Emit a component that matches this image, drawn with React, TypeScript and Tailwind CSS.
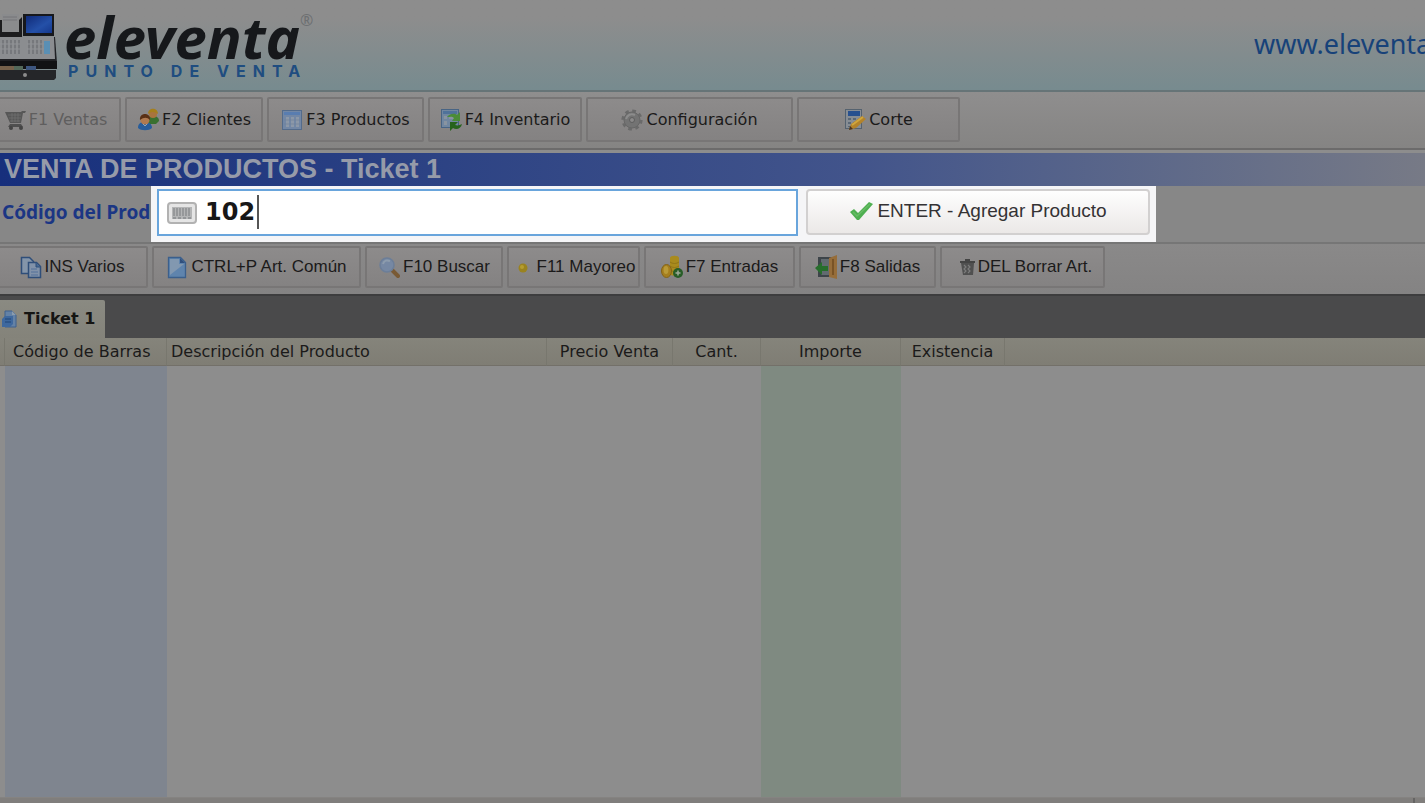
import type { ReactNode } from "react";

function LogoIcon() {
  return (
    <svg className="h-20 w-[58px] shrink-0" viewBox="0 0 58 80" aria-hidden="true">
      <defs>
        <linearGradient id="screen" x1="0" y1="0" x2="1" y2="1">
          <stop offset="0" stopColor="#102a78" />
          <stop offset="0.6" stopColor="#2450a8" />
          <stop offset="1" stopColor="#16388c" />
        </linearGradient>
      </defs>
      <path d="M0 20h2v12h17V20l3-3v20H0z" fill="#1c1c1e" />
      <path d="M2 14h17l-1 18H3z" fill="#8a8b8d" />
      <path d="M3 17h14M3 20h14" stroke="#747578" strokeWidth="1" />
      <path d="M23 14h31v22H23z" fill="#17181c" />
      <path d="M26 16h26v17H26z" fill="url(#screen)" />
      <path d="M0 37h55l2 26H0z" fill="#202124" />
      <path d="M0 37h54l1 22H0z" fill="#8b8d90" />
      <path d="M3 40v14M7 40v14M11 40v14M15 40v14M19 40v14M29 40v14M33 40v14M37 40v14M41 40v14" stroke="#76787c" strokeWidth="2" />
      <path d="M0 44h20M27 44h17M0 49h20M27 49h17" stroke="#909296" strokeWidth="1" />
      <path d="M44 41h6v13h-6z" fill="#5a8fb4" />
      <path d="M0 61h57v8H0z" fill="#111214" />
      <path d="M0 66h14v4H0z" fill="#75614b" />
      <path d="M14 66h9v4h-9z" fill="#536859" />
      <path d="M26 66h10v4H26z" fill="#3d567f" />
      <path d="M0 70h56v8l-2 2H0z" fill="#252629" />
      <circle cx="25" cy="75" r="2" fill="#8c8c8c" />
    </svg>
  );
}

function Icon({ children }: { children: ReactNode }) {
  return (
    <svg className="h-6 w-[22px] shrink-0" viewBox="0 0 22 24" aria-hidden="true">
      {children}
    </svg>
  );
}

const icons = {
  cart: (
    <Icon>
      <path d="M1 4h16l1-1h4l-1 2h-2l-2 10H6z" fill="#575757" />
      <path d="M4 7h13M5 10h12M6 13h10M8 5v9M11 5v9M14 5v9" stroke="#747474" strokeWidth="0.7" />
      <path d="M6 16h11l2 3H4z" fill="#4f4f4f" />
      <circle cx="7" cy="20" r="2" fill="#444" />
      <circle cx="17" cy="20" r="2" fill="#444" />
    </Icon>
  ),
  users: (
    <Icon>
      <path d="M10 14c0-5 2-6 6-6s6 2 6 5l-3 3h-9z" fill="#39702f" />
      <circle cx="16" cy="6" r="4" fill="#a8743e" />
      <path d="M11 6c0-7 10-7 10 0-3-2-6-3-10 0z" fill="#a57f1d" />
      <path d="M1 20c0-5 3-6 7-6s7 2 7 6c-3 3-11 3-14 0z" fill="#285d9b" />
      <circle cx="8" cy="12" r="4.5" fill="#b07a50" />
      <path d="M3 12c-1-8 11-8 10 0-3-3-6-3-10 0z" fill="#5a3015" />
      <path d="M6 16l2 2 2-2" fill="none" stroke="#92a4b5" />
    </Icon>
  ),
  table: (
    <Icon>
      <rect x="1.5" y="2.5" width="19" height="19" fill="#7287a5" stroke="#536b8b" />
      <path d="M3 4h16v3H3z" fill="#597db0" />
      <path d="M5 9h3v10H5zM10 9h3v10h-3zM15 9h3v10h-3z" fill="#8c98a8" />
      <path d="M3 12h16M3 16h16" stroke="#71839b" strokeWidth="0.7" />
    </Icon>
  ),
  inventory: (
    <Icon>
      <rect x="1.5" y="1.5" width="17" height="18" fill="#7187a0" stroke="#486484" />
      <path d="M3 3h14v3H3z" fill="#4f729a" />
      <path d="M4 8h3v3H4zM4 13h3v4H4zM9 8h7v3H9z" fill="#8994a0" />
      <path d="M7 9c3-4 8-4 10-2l3-3v9h-8l2-3c-2-2-4-1-7-1z" fill="#4b8c37" />
      <path d="M22 16c-1 5-6 6-9 4l-3 3v-9h8l-3 3c3 1 5 0 7-1z" fill="#27631d" />
    </Icon>
  ),
  gear: (
    <Icon>
      <circle cx="11" cy="12" r="8" fill="#737373" stroke="#666" />
      <circle cx="11" cy="12" r="9.3" fill="none" stroke="#6a6a6a" strokeWidth="2.6" strokeDasharray="3.7 3.6" />
      <path d="M5 11c1-4 5-6 9-4" fill="none" stroke="#8c8c8c" strokeWidth="2" />
      <circle cx="11" cy="12" r="2.5" fill="#8a8989" stroke="#5d5d5d" />
    </Icon>
  ),
  report: (
    <Icon>
      <rect x="1.5" y="1.5" width="16" height="19" fill="#878d94" stroke="#55626f" />
      <path d="M4 3h12v5H4z" fill="#27508f" />
      <path d="M4 10h3v2H4zM9 10h3v2H9zM4 14h3v2H4zM9 14h3v2H9zM4 18h3v1H4z" fill="#5b6876" />
      <path d="M5 22l2-6L18 8l4 3-10 9z" fill="#b3832b" />
      <path d="M8 17L19 9" stroke="#d0a63d" strokeWidth="2" />
      <path d="M5 22l1-4 3 3z" fill="#4b3321" />
    </Icon>
  ),
  copy: (
    <Icon>
      <path d="M1.5 2.5h8l4 4v12h-12z" fill="#8495a9" stroke="#2f4e79" strokeWidth="1.5" />
      <path d="M8.5 7.5h8l4 4v11h-12z" fill="#8192a9" stroke="#2f4e79" strokeWidth="1.5" />
      <path d="M16 8v4h4" fill="#456895" stroke="#2f4e79" />
      <path d="M11 14h6M11 17h7M11 20h7" stroke="#52719a" />
    </Icon>
  ),
  file: (
    <Icon>
      <path d="M2.5 2.5h12l5 5v15h-17z" fill="#5f84ad" stroke="#3b5f8c" strokeWidth="1.3" />
      <path d="M4 4h9v5h5L4 20z" fill="#8298b0" />
      <path d="M14 3v5h5z" fill="#304f7d" />
    </Icon>
  ),
  search: (
    <Icon>
      <path d="M14 15l6 6" stroke="#795a35" strokeWidth="4" strokeLinecap="round" />
      <circle cx="9" cy="10" r="7" fill="#7688a3" stroke="#6c7e98" strokeWidth="1.5" />
      <path d="M5 9c1-4 4-4 7-3" fill="none" stroke="#8d9cad" strokeWidth="2" />
    </Icon>
  ),
  dot: (
    <Icon>
      <circle cx="11" cy="13" r="4.5" fill="#9a831f" />
      <circle cx="10" cy="12" r="2" fill="#b59d31" />
    </Icon>
  ),
  coins: (
    <Icon>
      <path d="M9 3c0-3 9-3 9 0v16c0 2-9 2-9 0z" fill="#a98b1d" />
      <path d="M9 7c3 2 6 2 9 0M9 11c3 2 6 2 9 0M9 15c3 2 6 2 9 0" fill="none" stroke="#907517" />
      <ellipse cx="5.5" cy="16" rx="5" ry="6.5" fill="#a57e1e" stroke="#846416" />
      <ellipse cx="5" cy="15" rx="2.4" ry="4" fill="#b99a38" />
      <circle cx="17" cy="18" r="5" fill="#285d27" />
      <path d="M14.5 18h5M17 15.5v5" stroke="#9eaa9b" strokeWidth="1.5" />
    </Icon>
  ),
  door: (
    <Icon>
      <path d="M3 2h17v20H3z" fill="#3d4449" />
      <path d="M6 4h8v16H6z" fill="#626b70" />
      <path d="M14 3l8-3v24l-8-2z" fill="#966d3a" />
      <path d="M18 4v16" stroke="#795326" strokeWidth="2" />
      <path d="M0 13l7-6v4h6v5H7v4z" fill="#276e2c" />
    </Icon>
  ),
  trash: (
    <Icon>
      <path d="M8 8h13l-1 12H10z" fill="#505050" />
      <path d="M7 7h15M12 5h5" stroke="#444" strokeWidth="2" />
      <path d="M11 10l2 2-2 2 2 2-2 2M15 10l2 2-2 2 2 2-2 2" fill="none" stroke="#7c7c7c" strokeWidth="1.2" />
    </Icon>
  ),
};

type Action = { icon: ReactNode; label: string; width: string; disabled?: boolean };

const modules: Action[] = [
  { icon: icons.cart, label: "F1 Ventas", width: "w-[125px] pr-1.5", disabled: true },
  { icon: icons.users, label: "F2 Clientes", width: "w-[138px]" },
  { icon: icons.table, label: "F3 Productos", width: "w-[157px]" },
  { icon: icons.inventory, label: "F4 Inventario", width: "w-[154px]" },
  { icon: icons.gear, label: "Configuración", width: "w-[207px]" },
  { icon: icons.report, label: "Corte", width: "w-[163px]" },
];

const actions: Action[] = [
  { icon: icons.copy, label: "INS Varios", width: "w-[152px]" },
  { icon: icons.file, label: "CTRL+P Art. Común", width: "w-[209px]" },
  { icon: icons.search, label: "F10 Buscar", width: "w-[138px]" },
  { icon: icons.dot, label: "F11 Mayoreo", width: "w-[133px]" },
  { icon: icons.coins, label: "F7 Entradas", width: "w-[151px]" },
  { icon: icons.door, label: "F8 Salidas", width: "w-[137px]" },
  { icon: icons.trash, label: "DEL Borrar Art.", width: "w-[165px]" },
];

function ToolButton({ icon, label, width, disabled }: Action) {
  return (
    <button
      type="button"
      disabled={disabled}
      className={`flex h-full shrink-0 items-center justify-center gap-[3px] whitespace-nowrap rounded-xs border-2 border-[#787676] bg-linear-to-b from-[#8d8b8b] to-[#848282] text-[#1b1a1a] disabled:text-[#5f5e5e] ${width}`}
    >
      {icon}
      {label}
    </button>
  );
}

const columns = [
  { label: "", head: "", cell: "", width: "w-[5px]" },
  { label: "Código de Barras", head: "pl-2 text-left", cell: "bg-[#7f858f]", width: "w-[162px]" },
  { label: "Descripción del Producto", head: "pl-1 text-left", cell: "", width: "w-[380px]" },
  { label: "Precio Venta", head: "", cell: "", width: "w-[126px]" },
  { label: "Cant.", head: "", cell: "", width: "w-[88px]" },
  { label: "Importe", head: "", cell: "bg-[#7f8a81]", width: "w-[140px]" },
  { label: "Existencia", head: "", cell: "", width: "w-[104px]" },
  { label: "", head: "border-r-0", cell: "", width: "" },
];

export default function App() {
  return (
    <div className="flex min-h-screen flex-col overflow-hidden bg-[#8d8d8d] font-['DejaVu_Sans',Verdana,sans-serif] text-base text-[#1b1a1a]">
      <header className="flex h-[92px] shrink-0 items-start justify-between overflow-hidden border-b-2 border-[#667477] bg-linear-to-b from-[#8d8d8d] from-20% to-[#778b8f]">
        <div className="flex">
          <LogoIcon />
          <div className="pl-1.5 font-['Noto_Sans',sans-serif]">
            <div className="flex h-[62px] items-start">
              <span className="text-[58px] leading-[74px] font-bold text-[#16181b] italic">eleventa</span>
              <span className="pt-3 text-base leading-4 text-[#6d7072]">®</span>
            </div>
            <div className="pl-1 font-[Inter,sans-serif] text-base leading-[18px] font-bold tracking-[0.44em] text-[#1f4d80]">
              PUNTO DE VENTA
            </div>
          </div>
        </div>
        <a href="#sitio" className="mt-6 -mr-[68px] font-['Noto_Sans',sans-serif] text-[27px] leading-10 text-[#174279]">
          www.eleventa.com
        </a>
      </header>

      <nav className="-ml-1 flex h-[58px] shrink-0 gap-1 border-b-2 border-[#6c6b6b] bg-linear-to-b from-[#8f8e8e] to-[#858483] pt-[5px] pb-1.5">
        {modules.map((item) => (
          <ToolButton key={item.label} {...item} />
        ))}
      </nav>

      <h1 className="mt-[3px] h-[33px] shrink-0 bg-linear-to-r from-[#172f7c] via-[#42548b] via-60% to-[#777a86] pl-1 font-['Liberation_Sans',sans-serif] text-[27px] leading-[33px] font-bold whitespace-nowrap text-[#969ba9]">
        VENTA DE PRODUCTOS - Ticket 1
      </h1>

      <form className="flex h-[58px] shrink-0 items-start border-b-2 border-[#767676] bg-[#878787]" onSubmit={(e) => e.preventDefault()}>
        <label
          htmlFor="codigo"
          className="w-[151px] shrink-0 overflow-hidden pl-0.5 font-['Noto_Sans',sans-serif] text-[19px] leading-[52px] font-bold whitespace-nowrap text-[#1b3684]"
        >
          Código del Producto:
        </label>
        <div className="flex h-14 items-start gap-2 bg-[#f5f5f7] px-1.5 pt-[3px]">
          <div className="relative flex h-[47px] w-[641px] items-center gap-2 border-2 border-[#69a5dc] bg-white pl-2">
            <svg className="h-6 w-[30px] shrink-0" viewBox="0 0 30 24" aria-hidden="true">
              <rect x="1" y="2" width="28" height="20" rx="3" fill="#e5e5e5" stroke="#b2b2b2" strokeWidth="2" />
              <rect x="5" y="6" width="20" height="12" fill="#b4b5b6" />
              <path d="M7 7v8M10 7v8M13 7v8M16 7v8M19 7v8M22 7v8" stroke="#8c8f91" strokeWidth="1.5" />
              <path d="M6 17h3M11 17h3M16 17h3M21 17h3" stroke="#73777a" />
            </svg>
            <input
              id="codigo"
              type="text"
              defaultValue="102"
              className="h-full min-w-0 flex-1 bg-transparent pb-0.5 text-2xl font-bold text-[#171717] caret-transparent outline-none"
            />
            <span className="absolute top-1 left-[98px] h-[34px] w-0.5 bg-[#555]" aria-hidden="true" />
          </div>
          <button
            type="submit"
            className="flex h-[46px] w-[344px] items-center justify-center gap-1 rounded-sm border-2 border-[#d2d0d0] bg-linear-to-b from-[#fefefe] to-[#ebe8e7] pb-0.5 font-['Liberation_Sans',sans-serif] text-[19px] whitespace-nowrap text-[#343234]"
          >
            <svg className="h-6 w-6" viewBox="0 0 24 24" aria-hidden="true">
              <path d="M1 13l4-3 4 4L20 3l4 2L10 21H8z" fill="#4eaf50" />
              <path d="M4 13l4 4L21 5" fill="none" stroke="#66bb64" strokeWidth="1.6" />
            </svg>
            ENTER - Agregar Producto
          </button>
        </div>
      </form>

      <div className="-ml-1 flex h-[50px] shrink-0 gap-1 bg-linear-to-b from-[#8a8989] to-[#848383] pt-0.5 pb-1.5 font-['Liberation_Sans',sans-serif] text-[17px]">
        {actions.map((item) => (
          <ToolButton key={item.label} {...item} />
        ))}
      </div>

      <div className="flex h-11 shrink-0 items-end border-t-2 border-[#3d3d3e] bg-[#4a4a4b]" role="tablist">
        <button
          type="button"
          role="tab"
          aria-selected="true"
          className="flex h-[38px] w-[105px] items-center gap-1.5 rounded-tr-xs bg-linear-to-b from-[#8a8a82] to-[#84837a] font-bold whitespace-nowrap text-[#151513]"
        >
          <svg className="h-5 w-[18px] shrink-0" viewBox="0 0 18 20" aria-hidden="true">
            <path d="M5 2h7l4 4v12H5z" fill="#6482a6" stroke="#3f618d" />
            <path d="M12 2v4h4z" fill="#8b9cad" />
            <path d="M2 10l3-3h8v8l-3 3H2z" fill="#3e689e" />
            <path d="M5 10h6M5 13h6" stroke="#2a5084" strokeWidth="1.3" />
          </svg>
          Ticket 1
        </button>
      </div>

      <div className="grid flex-1">
        <table className="h-full w-full table-fixed border-separate border-spacing-0">
          <thead>
            <tr className="bg-linear-to-b from-[#85847b] to-[#7f7d74]">
              {columns.map((col, i) => (
                <th
                  key={i}
                  scope="col"
                  className={`h-7 border-r border-b border-r-[#78776e] border-b-[#737069] p-0 leading-[27px] font-normal whitespace-nowrap ${col.width} ${col.head}`}
                >
                  {col.label}
                </th>
              ))}
            </tr>
          </thead>
          <tbody>
            <tr>
              {columns.map((col, i) => (
                <td key={i} className={`p-0 ${col.cell}`} />
              ))}
            </tr>
          </tbody>
        </table>
      </div>
      <footer className="flex h-1.5 shrink-0 justify-end border-t border-[#858381] bg-[#807e7c] pr-2.5">
        <span className="w-0.5 bg-[#656463]" />
      </footer>
    </div>
  );
}
